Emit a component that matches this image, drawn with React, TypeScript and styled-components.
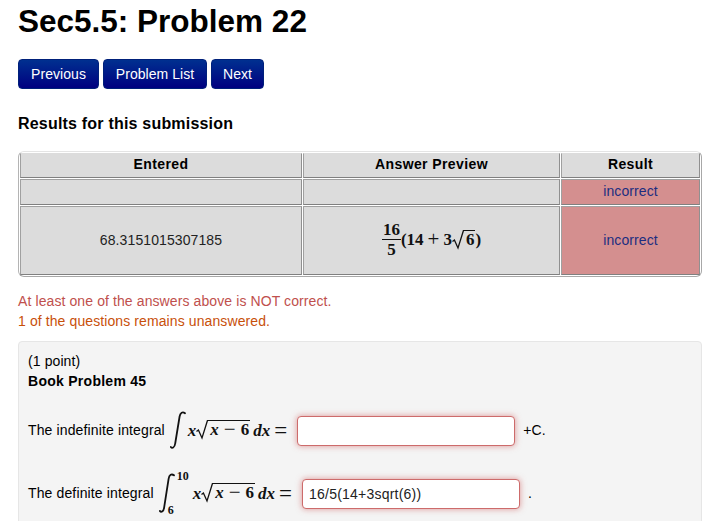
import React from "react";
import styled, { createGlobalStyle } from "styled-components";

const Global = createGlobalStyle`
  html, body { margin: 0; padding: 0; background: #fff; overflow: hidden; }
  body { font-family: "Liberation Sans", Arial, sans-serif; font-size: 14px; line-height: 20px; color: #000; height: 521px; letter-spacing: 0.1px; }
`;
const Page = styled.div`
  padding: 0 13px 0 18px;
  height: 521px;
  overflow: hidden;
`;
const Title = styled.h1`
  margin: 0;
  padding-top: 2px;
  font-size: 31.5px;
  line-height: 39px;
  font-weight: 700;
  letter-spacing: 0;
`;
const Nav = styled.div`
  display: flex;
  gap: 4px;
  margin-top: 18px;
`;
const NavButton = styled.a<{ $w: number }>`
  display: block;
  box-sizing: border-box;
  width: ${(p) => p.$w}px;
  height: 30px;
  line-height: 28px;
  text-align: center;
  color: #fff;
  font-size: 14px;
  letter-spacing: 0.05px;
  border: 1px solid #00207a;
  border-radius: 4px;
  background: linear-gradient(#003090, #000080);
`;
const Subhead = styled.h2`
  margin: 25px 0 0;
  font-size: 16px;
  line-height: 20px;
  font-weight: 700;
  letter-spacing: 0.2px;
`;
const Table = styled.table`
  box-sizing: border-box;
  width: 684px;
  margin-top: 17px;
  table-layout: fixed;
  border-collapse: separate;
  border-spacing: 1px;
  border: 1px solid #a8a8a8;
  border-top-color: #e4e4e4;
  border-left-color: #b4b4b4;
  border-radius: 6px;
`;
const Head = styled.th<{ $w: number }>`
  box-sizing: border-box;
  width: ${(p) => p.$w}px;
  height: 25px;
  padding: 0 0 3px;
  background: #dcdcdc;
  font-size: 14px;
  font-weight: 700;
  letter-spacing: 0.4px;
  text-align: center;
  border: 1px solid #dcdcdc;
  border-left-color: #a0a0a0;
  border-right-color: #909090;
  border-bottom-color: #808080;
`;
const Cell = styled.td<{ $bad?: boolean; $h: number }>`
  box-sizing: border-box;
  height: ${(p) => p.$h}px;
  padding: 0 0 2px;
  background: ${(p) => (p.$bad ? "#d48f8f" : "#dcdcdc")};
  color: ${(p) => (p.$bad ? "#1c2d80" : "#222")};
  text-align: center;
  vertical-align: middle;
  font-size: 14px;
  border: 1px solid #a0a0a0;
  border-right-color: #909090;
  border-bottom-color: #808080;
`;
const Math = styled.span`
  display: inline-flex;
  align-items: center;
  font-family: "Liberation Serif", "Times New Roman", serif;
  font-weight: 700;
  font-size: 17px;
  line-height: 17px;
  letter-spacing: 0;
  color: #111;
  white-space: nowrap;
`;
const Inline = styled(Math)<{ $left: number }>`
  margin: 0 0 2px ${(p) => p.$left}px;
`;
const Frac = styled.span`
  display: inline-flex;
  flex-direction: column;
  align-items: center;
  line-height: 19px;
`;
const FracTop = styled.span`
  display: block;
  border-bottom: 1.4px solid #111;
  padding: 0 1px;
`;
const Root = styled.span`
  display: inline-flex;
  align-items: flex-start;
  height: 20px;
`;
const Radicand = styled.span`
  display: inline-flex;
  align-items: center;
  border-top: 1.3px solid #111;
  height: 17px;
  padding: 0 1px 0 2px;
`;
const Var = styled.i<{ $left?: number }>`
  font-style: italic;
  font-weight: 700;
  margin-left: ${(p) => p.$left ?? 0}px;
`;
const Op = styled.span<{ $m: number; $size?: number }>`
  margin: 0 ${(p) => p.$m}px;
  font-weight: 400;
  font-size: ${(p) => p.$size ?? 21}px;
`;
const Messages = styled.div`
  margin-top: 14px;
`;
const Msg = styled.div<{ $c: string }>`
  color: ${(p) => p.$c};
`;
const Well = styled.div`
  box-sizing: border-box;
  margin-top: 10px;
  padding: 9px;
  height: 200px;
  background: #f4f4f4;
  border: 1px solid #e6e6e6;
  border-radius: 4px;
`;
const Strong = styled.div`
  font-weight: 700;
  letter-spacing: 0.27px;
`;
const Line = styled.div<{ $top: number; $h: number }>`
  display: flex;
  align-items: center;
  margin-top: ${(p) => p.$top}px;
  height: ${(p) => p.$h}px;
`;
const Prompt = styled.span`
  margin-bottom: 2px;
  letter-spacing: 0.13px;
`;
const Answer = styled.input`
  box-sizing: border-box;
  width: 218px;
  height: 30px;
  margin: 0 0 0 6px;
  padding: 0 6px;
  font: 14px "Liberation Sans", Arial, sans-serif;
  letter-spacing: 0.22px;
  color: #222;
  background: #fff;
  border: 1px solid #cd6b6b;
  border-radius: 4px;
  box-shadow: 0 0 6px rgba(200, 70, 70, 0.55);
  outline: none;
`;
const After = styled.span`
  margin: 0 0 2px 8px;
`;
const Limits = styled.span`
  display: inline-flex;
  flex-direction: column;
  justify-content: space-between;
  align-items: flex-start;
  height: 46px;
  font-size: 12px;
  line-height: 12px;
  margin: 0 4px 0 -7px;
`;
const Upper = styled.span`
  margin-left: 9px;
`;

const Radical = ({ h }: { h: number }) => (
  <svg width="12" height={h} viewBox={`0 0 12 ${h}`}>
    <path d={`M0.5 ${h - 8.5} L2.4 ${h - 10} L6 ${h - 2} L11.4 0.7 L12 0.7`} fill="none" stroke="#111" strokeWidth="1.3" />
  </svg>
);
const Integral = ({ h, w }: { h: number; w: number }) => (
  <svg width={w} height={h} viewBox="0 0 16 38" preserveAspectRatio="none">
    <path d="M0.8 36 C2 37.6 4.6 37 5.2 32.5 L9.6 5.5 C10.2 1.6 12.6 0.4 15 2.2" fill="none" stroke="#111" strokeWidth="1.8" strokeLinecap="round" />
  </svg>
);
const Sqrt = () => (
  <Root>
    <Radical h={20} />
    <Radicand>
      <Var>x</Var>
      <Op $m={5}>−</Op>6
    </Radicand>
  </Root>
);

export default function App() {
  return (
    <Page>
      <Global />
      <Title>Sec5.5: Problem 22</Title>
      <Nav>
        <NavButton $w={81}>Previous</NavButton>
        <NavButton $w={104}>Problem List</NavButton>
        <NavButton $w={53}>Next</NavButton>
      </Nav>
      <Subhead>Results for this submission</Subhead>
      <Table>
        <thead>
          <tr>
            <Head $w={282}>Entered</Head>
            <Head $w={257}>Answer Preview</Head>
            <Head $w={139}>Result</Head>
          </tr>
        </thead>
        <tbody>
          <tr>
            <Cell $h={26} />
            <Cell $h={26} />
            <Cell $h={26} $bad>incorrect</Cell>
          </tr>
          <tr>
            <Cell $h={69}>68.3151015307185</Cell>
            <Cell $h={69}>
              <Math>
                <Frac>
                  <FracTop>16</FracTop>
                  <span>5</span>
                </Frac>
                (14
                <Op $m={4}>+</Op>3
                <Root>
                  <Radical h={20} />
                  <Radicand>6</Radicand>
                </Root>
                )
              </Math>
            </Cell>
            <Cell $h={69} $bad>incorrect</Cell>
          </tr>
        </tbody>
      </Table>
      <Messages>
        <Msg $c="#c0504d">At least one of the answers above is NOT correct.</Msg>
        <Msg $c="#c8500a">1 of the questions remains unanswered.</Msg>
      </Messages>
      <Well>
        <div>(1 point)</div>
        <Strong>Book Problem 45</Strong>
        <Line $top={18} $h={44}>
          <Prompt>The indefinite integral</Prompt>
          <Inline $left={5}>
            <Integral h={38} w={16} />
            <Var $left={2}>x</Var>
            <Sqrt />
            <Var $left={3}>dx</Var>
            <Op $m={4} $size={23}>=</Op>
          </Inline>
          <Answer readOnly aria-label="indefinite" />
          <After>+C.</After>
        </Line>
        <Line $top={16} $h={50}>
          <Prompt>The definite integral</Prompt>
          <Inline $left={5}>
            <Integral h={40} w={16} />
            <Limits>
              <Upper>10</Upper>
              <span>6</span>
            </Limits>
            <Var>x</Var>
            <Sqrt />
            <Var $left={3}>dx</Var>
            <Op $m={4} $size={23}>=</Op>
          </Inline>
          <Answer readOnly aria-label="definite" value="16/5(14+3sqrt(6))" />
          <After>.</After>
        </Line>
      </Well>
    </Page>
  );
}
